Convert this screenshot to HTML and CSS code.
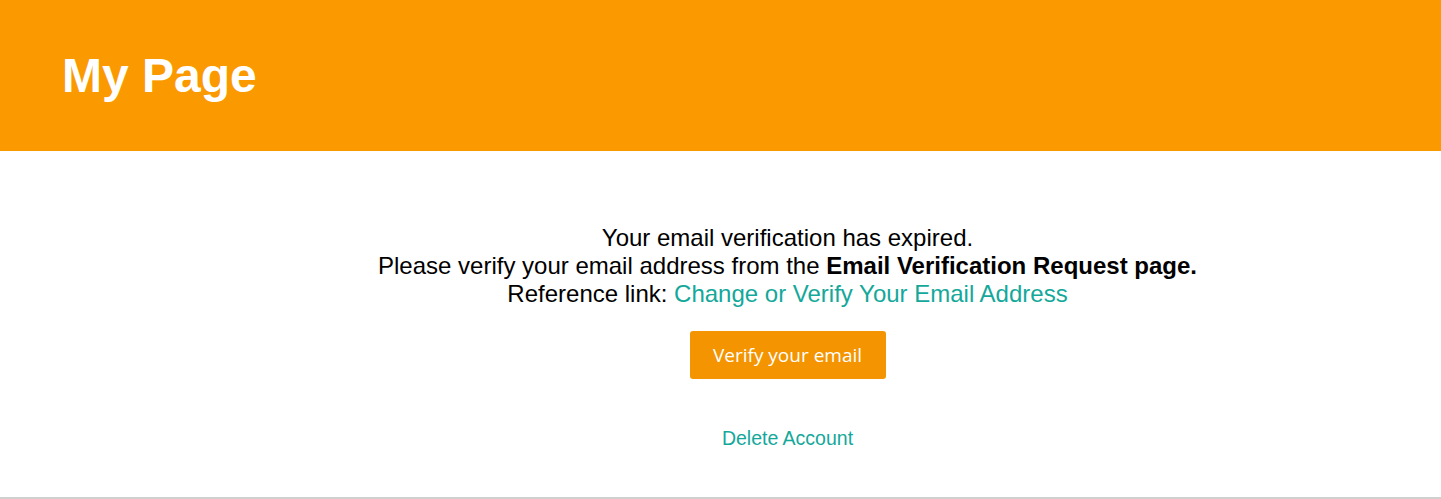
FILE: index.html
```html
<!DOCTYPE html>
<html lang="en">
<head>
<meta charset="utf-8">
<title>My Page</title>
<link rel="stylesheet" href="styles.css">
</head>
<body>
<header class="site-header">
  <h1 class="site-title">My Page</h1>
</header>
<main class="content">
  <div class="message">
    <p class="line">Your email verification has expired.</p>
    <p class="line">Please verify your email address from the <strong>Email Verification Request page.</strong></p>
    <p class="line">Reference link: <a class="link" href="#">Change or Verify Your Email Address</a></p>
  </div>
  <button class="verify-btn" type="button">Verify your email</button>
  <a class="delete-link" href="#">Delete Account</a>
</main>
</body>
</html>
```

FILE: styles.css
```css
html, body {
  margin: 0;
  padding: 0;
}
body {
  font-family: "Liberation Sans", Arial, sans-serif;
  color: #000;
  background: #fff;
  height: 499px;
  box-sizing: border-box;
}
.site-header {
  background: #fb9a00;
  height: 151px;
  display: flex;
  align-items: center;
  padding-left: 62px;
  box-sizing: border-box;
}
.site-title {
  margin: 0;
  color: #fff;
  font-size: 48px;
  font-weight: bold;
  line-height: 1;
}
.content {
  display: flex;
  flex-direction: column;
  align-items: center;
  padding-left: 134px;
  padding-top: 73px;
  height: 348px;
  box-sizing: border-box;
  border-bottom: 2px solid #d0d0d0;
}
.message {
  text-align: center;
  font-size: 24px;
  line-height: 28px;
}
.line {
  margin: 0;
}
.link {
  color: #14a89b;
  text-decoration: none;
}
.verify-btn {
  margin-top: 23px;
  width: 196px;
  height: 48px;
  background: #f39400;
  color: #fff;
  border: none;
  border-radius: 3px;
  font-family: "Open Sans", sans-serif;
  font-size: 19px;
  padding: 0;
  cursor: pointer;
}
.delete-link {
  margin-top: 48px;
  color: #14a89b;
  font-size: 19.5px;
  text-decoration: none;
}
```
